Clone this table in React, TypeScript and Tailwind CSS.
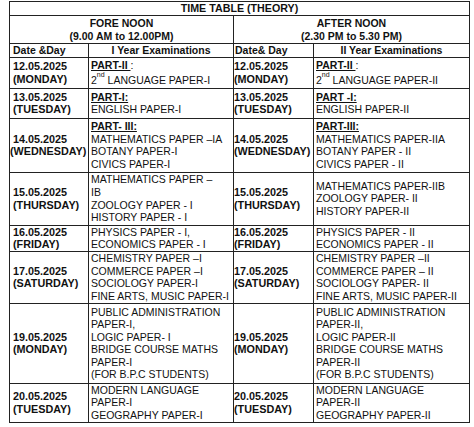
import React from "react";

type Row = {
  h: string;
  date: string;
  day: string;
  left: React.ReactNode;
  right: React.ReactNode;
};

const U = ({ children }: { children: React.ReactNode }) => (
  <span className="font-bold underline decoration-1 underline-offset-[1px]">{children}</span>
);

const Lines = ({ items }: { items: React.ReactNode[] }) => (
  <>
    {items.map((t, i) => (
      <div key={i} className="whitespace-nowrap">
        {t}
      </div>
    ))}
  </>
);

const rows: Row[] = [
  {
    h: "h-[31px]",
    date: "12.05.2025",
    day: "(MONDAY)",
    left: (
      <>
        <div>
          <U>PART-II </U>:
        </div>
        <div className="mt-[3px]">
          2<sup className="text-[7px] align-[4px]">nd</sup> LANGUAGE PAPER-I
        </div>
      </>
    ),
    right: (
      <>
        <div>
          <U>PART-II </U>:
        </div>
        <div className="mt-[3px]">
          2<sup className="text-[7px] align-[4px]">nd</sup> LANGUAGE PAPER-II
        </div>
      </>
    ),
  },
  {
    h: "h-[30px]",
    date: "13.05.2025",
    day: "(TUESDAY)",
    left: <Lines items={[<U>PART-I:</U>, "ENGLISH PAPER-I"]} />,
    right: <Lines items={[<U>PART -I:</U>, "ENGLISH PAPER-II"]} />,
  },
  {
    h: "h-[54px]",
    date: "14.05.2025",
    day: "(WEDNESDAY)",
    left: (
      <Lines
        items={[<U>PART- III:</U>, "MATHEMATICS PAPER \u2013IA", "BOTANY PAPER-I", "CIVICS PAPER-I"]}
      />
    ),
    right: (
      <Lines
        items={[<U>PART-III:</U>, "MATHEMATICS PAPER-IIA", "BOTANY PAPER - II", "CIVICS PAPER - II"]}
      />
    ),
  },
  {
    h: "h-[53px]",
    date: "15.05.2025",
    day: "(THURSDAY)",
    left: (
      <Lines items={["MATHEMATICS PAPER \u2013", "IB", "ZOOLOGY PAPER - I", "HISTORY PAPER - I"]} />
    ),
    right: <Lines items={["MATHEMATICS PAPER-IIB", "ZOOLOGY PAPER- II", "HISTORY PAPER-II"]} />,
  },
  {
    h: "h-[26px]",
    date: "16.05.2025",
    day: "(FRIDAY)",
    left: <Lines items={["PHYSICS PAPER - I,", "ECONOMICS PAPER - I"]} />,
    right: <Lines items={["PHYSICS PAPER - II", "ECONOMICS PAPER - II"]} />,
  },
  {
    h: "h-[52px]",
    date: "17.05.2025",
    day: "(SATURDAY)",
    left: (
      <Lines
        items={["CHEMISTRY PAPER \u2013I", "COMMERCE PAPER \u2013I", "SOCIOLOGY PAPER-I", "FINE ARTS, MUSIC PAPER-I"]}
      />
    ),
    right: (
      <Lines
        items={["CHEMISTRY PAPER \u2013II", "COMMERCE PAPER \u2013 II", "SOCIOLOGY PAPER- II", "FINE ARTS, MUSIC PAPER-II"]}
      />
    ),
  },
  {
    h: "h-[80px]",
    date: "19.05.2025",
    day: "(MONDAY)",
    left: (
      <Lines
        items={[
          "PUBLIC ADMINISTRATION",
          "PAPER-I,",
          "LOGIC PAPER- I",
          "BRIDGE COURSE MATHS",
          "PAPER-I",
          "(FOR B.P.C STUDENTS)",
        ]}
      />
    ),
    right: (
      <Lines
        items={[
          "PUBLIC ADMINISTRATION",
          "PAPER-II,",
          "LOGIC PAPER-II",
          "BRIDGE COURSE MATHS",
          "PAPER-II",
          "(FOR B.P.C STUDENTS)",
        ]}
      />
    ),
  },
  {
    h: "h-[36px]",
    date: "20.05.2025",
    day: "(TUESDAY)",
    left: <Lines items={["MODERN LANGUAGE", "PAPER-I", "GEOGRAPHY PAPER-I"]} />,
    right: <Lines items={["MODERN LANGUAGE", "PAPER-II", "GEOGRAPHY PAPER-II"]} />,
  },
];

const cell = "border border-[#222] align-middle p-0";

export default function App() {
  return (
    <div
      className="w-[474px] h-[427px] overflow-hidden bg-white text-[#111] text-[10.5px] leading-[12.6px]"
      style={{ fontFamily: '"Liberation Sans", Arial, sans-serif' }}
    >
      <div className="pt-[1px] pl-[9px]">
        <table className="table-fixed border-collapse w-[460px]">
          <colgroup>
            <col className="w-[79px]" />
            <col className="w-[145px]" />
            <col className="w-[80px]" />
            <col className="w-[156px]" />
          </colgroup>
          <tbody>
            <tr className="h-[14px]">
              <td colSpan={4} className={`${cell} text-center font-bold text-[10.7px]`}>
                TIME TABLE (THEORY)
              </td>
            </tr>
            <tr className="h-[28px]">
              <td colSpan={2} className={`${cell} text-center font-bold`}>
                <div>FORE NOON</div>
                <div>(9.00 AM to 12.00PM)</div>
              </td>
              <td colSpan={2} className={`${cell} text-center font-bold`}>
                <div>AFTER NOON</div>
                <div>(2.30 PM to 5.30 PM)</div>
              </td>
            </tr>
            <tr className="h-[13px] font-bold">
              <td className={`${cell} pl-[3px]`}>Date &amp;Day</td>
              <td className={`${cell} text-center`}>I Year Examinations</td>
              <td className={`${cell} pl-[1px]`}>Date&amp; Day</td>
              <td className={`${cell} text-center`}>II Year Examinations</td>
            </tr>
            {rows.map((r) => (
              <tr key={r.date} className={r.h}>
                <td className={`${cell} pl-[3px] font-bold text-[10.8px]`}>
                  <div className="whitespace-nowrap">{r.date}</div>
                  <div className="whitespace-nowrap -ml-[3px]">{r.day === "(WEDNESDAY)" ? r.day : <span className="pl-[3px]">{r.day}</span>}</div>
                </td>
                <td className={`${cell} pl-[2px]`}>{r.left}</td>
                <td className={`${cell} font-bold text-[10.8px]`}>
                  <div className="whitespace-nowrap">{r.date}</div>
                  <div className="whitespace-nowrap">{r.day}</div>
                </td>
                <td className={`${cell} pl-[2px]`}>{r.right}</td>
              </tr>
            ))}
          </tbody>
        </table>
        <div className="pl-[24px] pt-[6px] whitespace-nowrap text-[11px]">
          Practical Examinations will be conducted from 03.02.2025(Monday) to 22.02.2025
        </div>
      </div>
    </div>
  );
}
